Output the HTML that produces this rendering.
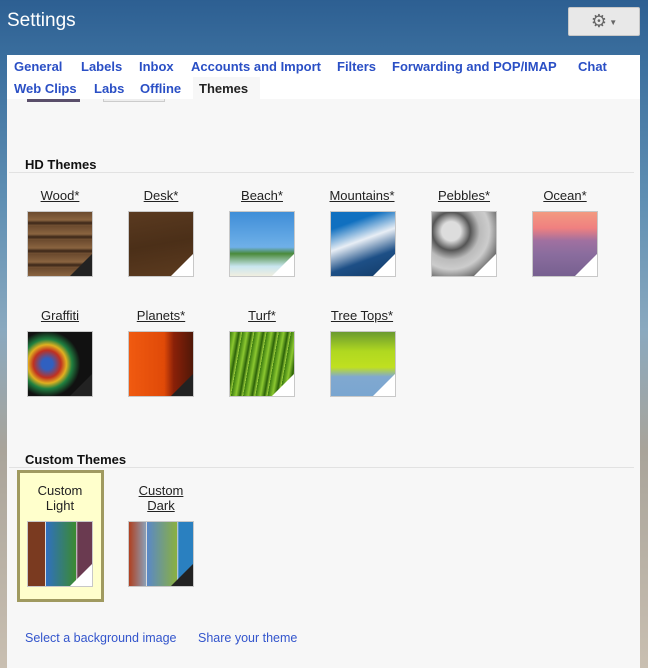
<!DOCTYPE html>
<html><head><meta charset="utf-8"><style>
*{margin:0;padding:0;box-sizing:border-box}
body{width:648px;height:668px;overflow:hidden;position:relative;font-family:"Liberation Sans",Arial,sans-serif;font-size:13px;
background:linear-gradient(180deg,#2d5f92 0,#3b6f9e 60px,#5f8fb3 200px,#8aa9bf 330px,#a9a49a 450px,#c9bfb1 668px)}
.title{position:absolute;left:7px;top:10px;color:#fff;font-size:19px}
.gear{position:absolute;left:568px;top:7px;width:72px;height:29px;background:#e8e8e8;border:1px solid #c8c8c8;border-radius:2px;color:#666;font-size:18px;text-align:center;line-height:27px}
.gear small{font-size:8px;vertical-align:middle}
.panel{position:absolute;left:7px;top:55px;width:633px;height:613px;background:#f7f7f7}
.tabs{position:absolute;left:0;top:0;width:633px;height:44px;background:#fff}
.tabs span{position:absolute;color:#2a4fc5;font-weight:bold;font-size:13px}
.th{position:absolute;left:18px;font-weight:bold;color:#111}
.hr{position:absolute;left:2px;width:625px;height:1px;background:#e2e2e2}
.lbl{position:absolute;width:66px;text-align:center;color:#222;text-decoration:underline;font-size:13px}
.lbl.n{text-decoration:none}
.img{position:absolute;width:66px;height:66px;border:1px solid #c8c8c8;overflow:hidden}
.img:after{content:"";position:absolute;right:0;bottom:0;width:0;height:0;border-left:22px solid transparent;border-bottom:22px solid #fff}
.img.d:after{border-bottom-color:#222}
.links{position:absolute;top:576px;color:#3355cc;font-size:12.5px}
</style></head><body>
<div class="title">Settings</div>
<div class="gear">⚙<small> ▼</small></div>
<div class="panel">
 <div class="tabs">
  <span style="left:7px;top:4px">General</span>
  <span style="left:74px;top:4px">Labels</span>
  <span style="left:132px;top:4px">Inbox</span>
  <span style="left:184px;top:4px">Accounts and Import</span>
  <span style="left:330px;top:4px">Filters</span>
  <span style="left:385px;top:4px">Forwarding and POP/IMAP</span>
  <span style="left:571px;top:4px">Chat</span>
  <span style="left:7px;top:26px">Web Clips</span>
  <span style="left:87px;top:26px">Labs</span>
  <span style="left:133px;top:26px">Offline</span>
  <span style="left:186px;top:22px;width:67px;height:22px;background:#f7f7f7"></span>
  <span style="left:192px;top:26px;color:#222">Themes</span>
 </div>
 <div style="position:absolute;left:20px;top:44px;width:53px;height:3px;background:#5a4f6a"></div>
 <div style="position:absolute;left:96px;top:44px;width:62px;height:3px;border:1px solid #ccc;border-top:0;background:#eee"></div>
 <div class="th" style="top:102px">HD Themes</div>
 <div class="hr" style="top:117px"></div>

 <div class="lbl" style="left:20px;top:133px">Wood*</div>
 <div class="lbl" style="left:121px;top:133px">Desk*</div>
 <div class="lbl" style="left:222px;top:133px">Beach*</div>
 <div class="lbl" style="left:313px;top:133px;width:84px">Mountains*</div>
 <div class="lbl" style="left:424px;top:133px">Pebbles*</div>
 <div class="lbl" style="left:525px;top:133px">Ocean*</div>
 <div class="img d" style="left:20px;top:156px;background:repeating-linear-gradient(180deg,#6b4a2e 0,#8a6440 8px,#3a2618 11px,#7a5636 14px)"></div>
 <div class="img" style="left:121px;top:156px;background:linear-gradient(170deg,#5a3a20,#4b2f18 50%,#5c3b1f)"></div>
 <div class="img" style="left:222px;top:156px;background:linear-gradient(180deg,#3f8ed8 0,#6fb0e8 55%,#4a8a3a 65%,#c9e6f0 85%,#f0eee0)"></div>
 <div class="img" style="left:323px;top:156px;background:linear-gradient(160deg,#1070c0 20%,#e8eef5 45%,#1d4f86 70%,#123a66)"></div>
 <div class="img" style="left:424px;top:156px;background:radial-gradient(circle at 30% 30%,#ddd 15%,#555 30%,#bbb 45%,#ccc 60%,#666 80%)"></div>
 <div class="img" style="left:525px;top:156px;background:linear-gradient(180deg,#f39a80 0,#f08080 25%,#a070a0 45%,#8b6d9e 65%,#776090)"></div>

 <div class="lbl" style="left:20px;top:253px">Graffiti</div>
 <div class="lbl" style="left:121px;top:253px;width:66px">Planets*</div>
 <div class="lbl" style="left:222px;top:253px">Turf*</div>
 <div class="lbl" style="left:313px;top:253px;width:84px">Tree Tops*</div>
 <div class="img d" style="left:20px;top:276px;background:radial-gradient(circle at 30% 50%,#3060c0 10%,#c03020 25%,#e0b020 35%,#208040 45%,#111 60%)"></div>
 <div class="img d" style="left:121px;top:276px;background:linear-gradient(90deg,#f05a10 0,#e04a08 55%,#8a2008 70%,#501808)"></div>
 <div class="img" style="left:222px;top:276px;background:repeating-linear-gradient(100deg,#3a7a10 0,#8cc830 5px,#2a6008 9px,#a6d840 12px)"></div>
 <div class="img" style="left:323px;top:276px;background:linear-gradient(180deg,#6a9a30 0,#b0d820 30%,#c0e020 55%,#80a8d0 70%,#7aa6d0)"></div>

 <div class="th" style="top:397px">Custom Themes</div>
 <div class="hr" style="top:412px"></div>
 <div style="position:absolute;left:10px;top:415px;width:87px;height:132px;background:#ffffcc;border:3px solid #a09a60"></div>
 <div class="lbl n" style="left:20px;top:428px">Custom<br>Light</div>
 <div class="lbl" style="left:121px;top:428px">Custom<br>Dark</div>
 <div class="img" style="left:20px;top:466px;background:linear-gradient(90deg,#7a3a20 0,#7a3a20 17px,#ddd 17px,#ddd 18px,#3070c0 18px,#3b8a30 48px,#ddd 48px,#6a3a50 50px)"></div>
 <div class="img d" style="left:121px;top:466px;background:linear-gradient(90deg,#b04020 0,#8aa0b8 17px,#ddd 17px,#ddd 18px,#5a88c8 18px,#8ab040 48px,#ddd 48px,#2a80c0 50px)"></div>

 <div class="links" style="left:18px">Select a background image</div>
 <div class="links" style="left:191px">Share your theme</div>
</div>
</body></html>
